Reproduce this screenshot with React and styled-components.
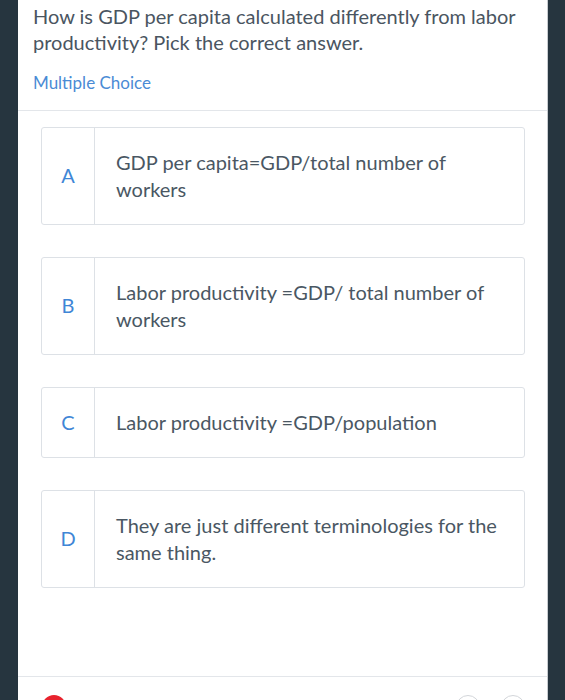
import React from 'react'
import styled, { createGlobalStyle } from 'styled-components'

const GlobalStyle = createGlobalStyle`
  html, body {
    margin: 0;
    padding: 0;
    background: #26353f;
  }
  * { box-sizing: border-box; }
`

const Page = styled.div`
  height: 700px;
  overflow: hidden;
  padding: 0 17px 0 18px;
  background: #26353f;
  font-family: Lato, "Open Sans", sans-serif;
`

const Sheet = styled.div`
  height: 100%;
  background: #fff;
  border-right: 1px solid #c8ccd0;
  display: flex;
  flex-direction: column;
`

const Header = styled.div`
  padding: 3px 20px 0 15px;
  height: 111px;
  border-bottom: 1px solid #e3e6ea;
`

const Question = styled.div`
  font-size: 20px;
  line-height: 26px;
  color: #4a5561;
`

const Kind = styled.div`
  margin-top: 17px;
  font-size: 17px;
  color: #4a8bd5;
`

const Answers = styled.div`
  flex: 1;
  display: flex;
  flex-direction: column;
  gap: 32px;
  padding: 16px 22px 0 23px;
  border-bottom: 1px solid #e3e6ea;
`

const Option = styled.div`
  display: flex;
  border: 1px solid #dde1e6;
  border-radius: 3px;
  min-height: ${p => (p.$tall ? '98px' : '71px')};
`

const Letter = styled.div`
  width: 53px;
  flex-shrink: 0;
  display: flex;
  align-items: center;
  justify-content: center;
  padding-bottom: 2px;
  border-right: 1px solid #dde1e6;
  font-size: 20px;
  color: #3f86d6;
`

const Text = styled.div`
  flex: 1;
  display: flex;
  align-items: center;
  padding: 0 20px 0 21px;
  font-size: 20px;
  line-height: 27px;
  color: #4a5763;
`

const Footer = styled.div`
  height: 23px;
  display: flex;
  align-items: flex-start;
  padding: 18px 22px 0 24px;
`

const Dot = styled.div`
  width: 24px;
  height: 24px;
  flex-shrink: 0;
  border-radius: 50%;
  background: ${p => (p.$red ? '#e8232e' : '#fff')};
  border: ${p => (p.$red ? 'none' : '1.5px solid #d3d6da')};
`

const Spacer = styled.div`
  flex: 1;
`

const Pair = styled.div`
  display: flex;
  gap: 21px;
`

const options = [
  { key: 'A', text: 'GDP per capita=GDP/total number of workers', tall: true },
  { key: 'B', text: 'Labor productivity =GDP/ total number of workers', tall: true },
  { key: 'C', text: 'Labor productivity =GDP/population', tall: false },
  { key: 'D', text: 'They are just different terminologies for the same thing.', tall: true },
]

export default function App() {
  return (
    <>
      <GlobalStyle />
      <Page>
        <Sheet>
          <Header>
            <Question>
              How is GDP per capita calculated differently from labor productivity? Pick the correct answer.
            </Question>
            <Kind>Multiple Choice</Kind>
          </Header>
          <Answers>
            {options.map(o => (
              <Option key={o.key} $tall={o.tall}>
                <Letter>{o.key}</Letter>
                <Text>{o.text}</Text>
              </Option>
            ))}
          </Answers>
          <Footer>
            <Dot $red />
            <Spacer />
            <Pair>
              <Dot />
              <Dot />
            </Pair>
          </Footer>
        </Sheet>
      </Page>
    </>
  )
}
